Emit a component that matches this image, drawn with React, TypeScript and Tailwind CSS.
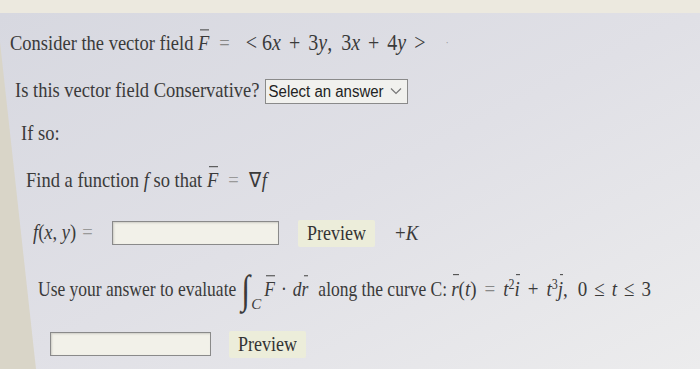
import React from 'react';

const serif = { fontFamily: '"Liberation Serif", "Times New Roman", serif' };

// the photo is a little stretched in height, so the text is too
function T({ children, className = '' }: { children: React.ReactNode; className?: string }) {
  return <span className={`inline-block scale-y-[1.15] whitespace-nowrap ${className}`}>{children}</span>;
}

function Bar({ children }: { children: React.ReactNode }) {
  return (
    <span className="relative inline-block italic">
      <span className="absolute left-[2px] right-0 top-[1px] h-px bg-[#555]" />
      {children}
    </span>
  );
}

function Op({ children, className = 'mx-[7px]' }: { children: React.ReactNode; className?: string }) {
  return <span className={className}>{children}</span>;
}

function PreviewButton({ className = '' }: { className?: string }) {
  return (
    <button
      className={`h-[27px] rounded-[2px] bg-[#ecedda] px-[9px] text-[18px] text-[#333] ${className}`}
      style={serif}
    >
      <T>Preview</T>
    </button>
  );
}

function Field({ className = '' }: { className?: string }) {
  return (
    <div
      className={`h-[24px] border border-[#8a8a8a] bg-[#f2f1e9] shadow-[inset_1px_1px_2px_rgba(0,0,0,0.15)] ${className}`}
    />
  );
}

export default function App() {
  return (
    <div className="relative h-[369px] w-[700px] overflow-hidden bg-[#ece9df] text-[#3a3a3a]" style={serif}>
      <div className="mt-[13px] flex h-[356px] flex-col bg-gradient-to-br from-[#d7d8e0] via-[#e0e0e6] to-[#ececed] text-[18.5px]">
        {/* vector field */}
        <div className="ml-[10px] mt-[17px] flex h-[24px] items-center">
          <T>
            Consider the vector field&nbsp;<Bar>F</Bar>
            <Op className="ml-[10px] mr-[16px] text-[#888]">=</Op>
            <span className="text-[20px]">
              &lt;<Op className="ml-[5px]">6<i>x</i></Op>
              <Op className="mx-[8px]">+</Op>3<i>y</i>,<Op className="ml-[9px]">3<i>x</i></Op>
              <Op className="mx-[8px]">+</Op>4<i>y</i>
              <Op className="ml-[8px]">&gt;</Op>
            </span>
          </T>
          <span className="ml-[20px] text-[10px] text-[#999]">·</span>
        </div>

        {/* conservative */}
        <div className="ml-[15px] mt-[24px] flex h-[26px] items-center">
          <T>Is this vector field Conservative?</T>
          <div
            className="ml-[5px] flex h-[25px] w-[143px] items-center justify-between border border-[#8a8a8a] bg-[#f1f1ee] pl-[3px] pr-[5px] text-[15px] text-[#222]"
            style={{ fontFamily: '"Liberation Sans", Arial, sans-serif' }}
          >
            <T>Select an answer</T>
            <svg width="12" height="8" viewBox="0 0 12 8" fill="none" stroke="#777" strokeWidth="1.2">
              <path d="M1 1.5 L6 6.5 L11 1.5" />
            </svg>
          </div>
        </div>

        {/* if so */}
        <div className="ml-[21px] mt-[18px] flex h-[24px] items-center">
          <T>If so:</T>
        </div>

        {/* find function */}
        <div className="ml-[26px] mt-[22px] flex h-[26px] items-center">
          <T>
            Find a function <i>f</i> so that <Bar>F</Bar>
            <Op className="mx-[10px] text-[#999]">=</Op>∇<i>f</i>
          </T>
        </div>

        {/* f(x,y) */}
        <div className="ml-[33px] mt-[25px] flex h-[28px] items-center">
          <T className="w-[79px]">
            <i>f</i>(<i>x</i>,&nbsp;<i>y</i>)<Op className="ml-[6px] text-[#999]">=</Op>
          </T>
          <Field className="w-[167px]" />
          <PreviewButton className="ml-[19px]" />
          <T className="ml-[20px] text-[19px]">
            +<i>K</i>
          </T>
        </div>

        {/* use your answer */}
        <div className="ml-[38px] mt-[22px] flex h-[40px] items-center text-[17.5px]">
          <T className="scale-y-[1.2]">Use your answer to evaluate</T>
          <span className="relative ml-[5px] mr-[9px] inline-block w-[14px]">
            <span className="block scale-y-[1.25] text-[32px] italic leading-[34px]">∫</span>
            <span className="absolute bottom-[-9px] left-[10px] text-[15px] italic">C</span>
          </span>
          <T className="scale-y-[1.2]">
            <Bar>F</Bar>
            <Op className="mx-[6px]">·</Op>
            <i>d</i>
            <Bar>r</Bar>
            <span className="ml-[10px]">along the curve C:</span>
            <span className="text-[19px]">
              <span className="ml-[4px]">
                <Bar>r</Bar>(<i>t</i>)
              </span>
              <Op className="mx-[8px] text-[#888]">=</Op>
              <i>t</i>
              <sup className="text-[12px]">2</sup>
              <Bar>i</Bar>
              <Op className="mx-[8px]">+</Op>
              <i>t</i>
              <sup className="text-[12px]">3</sup>
              <Bar>j</Bar>,
              <span className="ml-[10px]">0</span>
              <Op className="mx-[7px]">≤</Op>
              <i>t</i>
              <Op className="mx-[7px]">≤</Op>3
            </span>
          </T>
        </div>

        {/* bottom input */}
        <div className="ml-[50px] mt-[21px] flex h-[28px] items-center">
          <Field className="w-[161px]" />
          <PreviewButton className="ml-[18px]" />
        </div>
      </div>

      {/* bezel edge seen at the left of the photo */}
      <svg className="absolute left-0 top-0" width="40" height="369" viewBox="0 0 40 369">
        <polygon points="0,42 36,369 0,369" fill="#d9d5c8" />
      </svg>
    </div>
  );
}
